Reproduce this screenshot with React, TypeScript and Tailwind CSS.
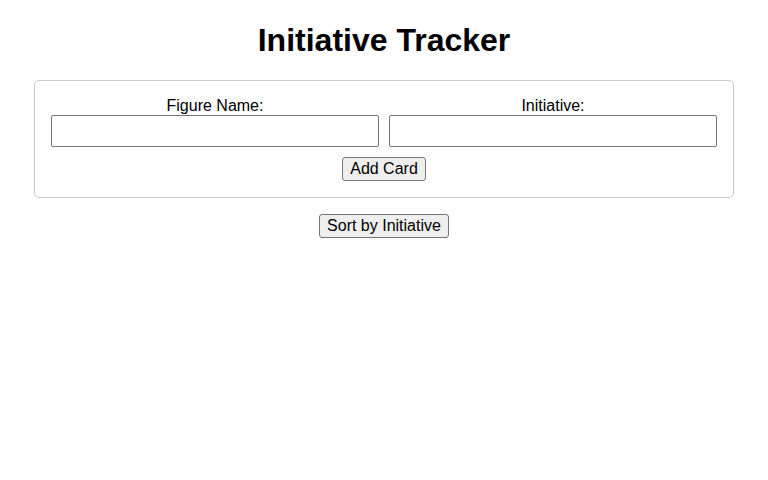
import { FC, useState } from 'react';

interface Card {
  name: string;
  initiative: number;
}

const App: FC = () => {
  const [name, setName] = useState('');
  const [initiative, setInitiative] = useState('');
  const [cards, setCards] = useState<Card[]>([]);

  const addCard = () => {
    if (!name) return;
    setCards([...cards, { name, initiative: Number(initiative) || 0 }]);
    setName('');
    setInitiative('');
  };

  const sortCards = () => {
    setCards([...cards].sort((a, b) => b.initiative - a.initiative));
  };

  return (
    <div className="min-h-screen bg-white text-black font-['Liberation_Sans',Arial,sans-serif]">
      <div className="px-[34px]">
        <h1 className="text-[32px] leading-[37px] font-bold text-center pt-[22px] pb-[21px]">Initiative Tracker</h1>
        <div className="border border-[#cccccc] rounded-[5px] p-4">
          <div className="flex gap-[10px]">
            <div className="flex-1 flex flex-col text-center">
              <label className="text-base leading-[18px]">Figure Name:</label>
              <input
                value={name}
                onChange={(e) => setName(e.target.value)}
                className="h-8 w-full border border-[#767676] rounded-[2px] px-2 text-base"
              />
            </div>
            <div className="flex-1 flex flex-col text-center">
              <label className="text-base leading-[18px]">Initiative:</label>
              <input
                value={initiative}
                onChange={(e) => setInitiative(e.target.value)}
                className="h-8 w-full border border-[#767676] rounded-[2px] px-2 text-base"
              />
            </div>
          </div>
          <div className="flex justify-center mt-[10px]">
            <button
              onClick={addCard}
              className="h-6 px-[7px] bg-[#efefef] border border-[#767676] rounded-[3px] text-base leading-[18px]"
            >
              Add Card
            </button>
          </div>
        </div>
        <div className="flex justify-center mt-4">
          <button
            onClick={sortCards}
            className="h-6 px-[7px] bg-[#efefef] border border-[#767676] rounded-[3px] text-base leading-[18px]"
          >
            Sort by Initiative
          </button>
        </div>
        <div className="flex flex-col items-center gap-2 mt-4">
          {cards.map((c, i) => (
            <div key={i} className="border border-[#cccccc] rounded-[5px] px-4 py-2 w-[300px] text-center">
              {c.name}: {c.initiative}
            </div>
          ))}
        </div>
      </div>
    </div>
  );
};

export default App;
